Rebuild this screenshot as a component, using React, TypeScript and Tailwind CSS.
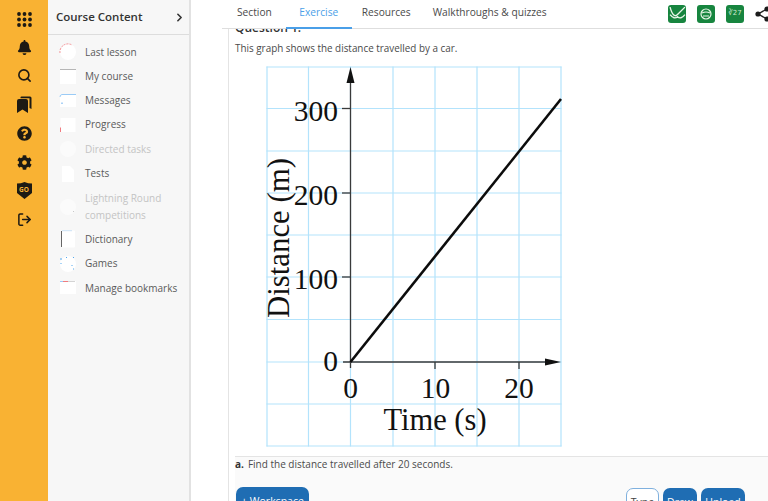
import React from 'react';
import { FaBell, FaCog, FaQuestionCircle } from 'react-icons/fa';
import { ChevronRight, LogOut, Search } from 'lucide-react';

const menu = [
	{ label: 'Last lesson', kind: 'lesson' },
	{ label: 'My course', kind: 'course' },
	{ label: 'Messages', kind: 'messages' },
	{ label: 'Progress', kind: 'progress' },
	{ label: 'Directed tasks', kind: 'directed', muted: true },
	{ label: 'Tests', kind: 'tests' },
	{ label: 'Lightning Round competitions', kind: 'lightning', muted: true },
	{ label: 'Dictionary', kind: 'dictionary' },
	{ label: 'Games', kind: 'games' },
	{ label: 'Manage bookmarks', kind: 'bookmarks' },
];

// the menu pictures did not load fully in the original, only slivers show
const MenuIcon = ({ kind }: { kind: string }) => (
	<svg width="18" height="18" viewBox="0 0 18 18" className="shrink-0">
		{kind === 'lesson' && (
			<>
				<circle cx="9" cy="9" r="8" fill="#fff" />
				<path d="M1 10A8 8 0 0 1 13 2" fill="none" stroke="#f27a7f" strokeWidth="0.8" strokeDasharray="2 1" />
			</>
		)}
		{kind === 'course' && (
			<>
				<rect x="1" y="2" width="16" height="15" fill="#fff" />
				<path d="M1 2.500H17" stroke="#a3a3a3" strokeWidth="0.8" />
			</>
		)}
		{kind === 'messages' && (
			<>
				<rect x="1" y="2" width="16" height="13" fill="#fff" />
				<path d="M17 2.500H3Q1 2.500 1 5" fill="none" stroke="#8ec5f5" strokeWidth="0.9" />
				<path d="M3 10.500V12" stroke="#5aa7ee" strokeWidth="1" />
			</>
		)}
		{kind === 'progress' && (
			<>
				<rect x="1.500" y="2" width="15" height="14" fill="#fff" />
				<path d="M1.500 11.500V16" stroke="#ee6c72" strokeWidth="0.9" />
			</>
		)}
		{kind === 'directed' && <circle cx="9" cy="9" r="8" fill="#fbfbfb" />}
		{kind === 'tests' && <path d="M3 1H11L15 5V17H3Z" fill="#fff" />}
		{kind === 'lightning' && (
			<>
				<circle cx="9" cy="9" r="8" fill="#fbfbfb" />
				<path d="M14.500 13V14" stroke="#bbb" strokeWidth="0.8" />
			</>
		)}
		{kind === 'dictionary' && (
			<>
				<rect x="2" y="0.500" width="14" height="17" rx="1" fill="#fff" />
				<path d="M2.500 1V17" stroke="#555" strokeWidth="0.9" />
				<path d="M3 0.700H13" stroke="#b8d8f3" strokeWidth="0.7" />
			</>
		)}
		{kind === 'games' && (
			<>
				<circle cx="9" cy="9" r="8" fill="#fff" />
				<path d="M1 4H3M7 2.500H8M14 2.500H15M2 8V9M13 10V11M14.500 13.500V14.500" stroke="#52a9ef" strokeWidth="1" />
			</>
		)}
		{kind === 'bookmarks' && (
			<>
				<rect x="1" y="2" width="16" height="13" fill="#fff" />
				<path d="M1 2.500H4" stroke="#8ec5f5" strokeWidth="0.9" />
				<path d="M4 2.500H9" stroke="#ee6c72" strokeWidth="0.9" />
				<path d="M9 2.500H16" stroke="#c9c9c9" strokeWidth="0.8" />
			</>
		)}
	</svg>
);

const AppsIcon = () => (
	<svg width="15" height="15" viewBox="0 0 15 15" fill="#1d1a14">
		{[2, 7.500, 13].map((y) => [2, 7.500, 13].map((x) => <circle key={`${x}-${y}`} cx={x} cy={y} r="1.900" />))}
	</svg>
);

const BookmarksIcon = () => (
	<svg width="15" height="17" viewBox="0 0 15 17" fill="#1d1a14">
		<path d="M0 5Q0 3 2 3H9Q11 3 11 5V17L5.500 13.500 0 17Z" />
		<path d="M3.500 1.800V1.500Q3.500 0.500 4.500 0.500H13Q14.500 0.500 14.500 2V13L12.500 12V2.200H3.500Z" />
	</svg>
);

const GoIcon = () => (
	<div className="relative flex h-[17px] w-[15px] items-start justify-center">
		<svg width="15" height="17" viewBox="0 0 15 17" className="absolute inset-0">
			<path d="M0 1.500Q4 1.500 7.500 0 11 1.500 15 1.500V11L7.500 17 0 11Z" fill="#1d1a14" />
		</svg>
		<span className="relative mt-[4px] text-[6.500px] leading-[8px] font-bold text-[#f9b233]">GO</span>
	</div>
);

const GreenIcon = ({ children }: { children: React.ReactNode }) => (
	<div className="flex h-[18px] w-[18px] items-center justify-center overflow-hidden rounded-[3px] bg-[#17853f]">{children}</div>
);

const Graph = () => {
	const xs = [267, 308.500, 350.500, 393, 435, 477, 519, 561];
	const ys = [67, 108.500, 151, 193, 235, 277, 319.500, 362, 404, 446];
	return (
		<svg width="300" height="384" viewBox="264 65 300 384" className="block" fontFamily='"Liberation Serif", serif' fill="#111">
			<rect x="267" y="67" width="294" height="379" fill="#fff" />
			{xs.map((x) => (
				<line key={x} x1={x} x2={x} y1="66.500" y2="446.500" stroke="#b3e3fc" strokeWidth="1.200" />
			))}
			{ys.map((y) => (
				<line key={y} x1="266.500" x2="561.500" y1={y} y2={y} stroke="#b3e3fc" strokeWidth="1.200" />
			))}
			<line x1="350.500" x2="350.500" y1="80" y2="368" stroke="#3a3a3a" strokeWidth="1.300" />
			<line x1="343" x2="546" y1="362" y2="362" stroke="#3a3a3a" strokeWidth="1.300" />
			<path d="M350.500 67L354.500 83H346.500Z" fill="#111" />
			<path d="M561 362L545 358.500V365.500Z" fill="#111" />
			{[108.500, 193, 277].map((y) => (
				<line key={y} x1="342" x2="350" y1={y} y2={y} stroke="#3a3a3a" strokeWidth="1.300" />
			))}
			{[435, 519].map((x) => (
				<line key={x} x1={x} x2={x} y1="362" y2="369" stroke="#3a3a3a" strokeWidth="1.300" />
			))}
			<line x1="350.500" y1="362" x2="561" y2="99" stroke="#0c0c0c" strokeWidth="2.600" />
			<g fontSize="29.500">
				<text x="338" y="121" textAnchor="end">300</text>
				<text x="338" y="205" textAnchor="end">200</text>
				<text x="338" y="289" textAnchor="end">100</text>
				<text x="338" y="371" textAnchor="end">0</text>
				<text x="350.500" y="398" textAnchor="middle">0</text>
				<text x="435.500" y="398" textAnchor="middle">10</text>
				<text x="519" y="398" textAnchor="middle">20</text>
			</g>
			<text x="435" y="430" textAnchor="middle" fontSize="30.500">Time (s)</text>
			<text transform="translate(289 318) rotate(-90)" fontSize="30.800">Distance (m)</text>
		</svg>
	);
};

const App = () => {
	return (
		<div className="flex h-[501px] w-[768px] overflow-hidden bg-white font-['Open_Sans',sans-serif] text-[#4a4a4a]">
			<nav className="flex w-[48px] shrink-0 flex-col items-center bg-[#f9b233] pt-[12px] text-[#1d1a14]">
				<AppsIcon />
				<div className="mt-[13px]"><FaBell size={15} /></div>
				<div className="mt-[13px]"><Search size={15} strokeWidth={2.600} /></div>
				<div className="mt-[13px]"><BookmarksIcon /></div>
				<div className="mt-[13px]"><FaQuestionCircle size={15} /></div>
				<div className="mt-[14px]"><FaCog size={15} /></div>
				<div className="mt-[12px]"><GoIcon /></div>
				<div className="mt-[13px]"><LogOut size={15} strokeWidth={2.400} /></div>
			</nav>

			<aside className="w-[143px] shrink-0 border-r-2 border-[#e2e2e2] bg-[#f7f7f7]">
				<div className="flex h-[35px] items-center justify-between border-b border-[#dddddd] pr-[3px] pl-[8px]">
					<span className="text-[11.500px] font-semibold text-[#333]">Course Content</span>
					<ChevronRight size={13} strokeWidth={3} className="text-[#333]" />
				</div>
				<ul className="pt-[5px]">
					{menu.map((item) => (
						<li
							key={item.label}
							className={`flex items-center pb-[3.150px] pl-[11px] ${item.kind === 'lightning' ? 'pt-[4.500px]' : 'pt-[3.150px]'} ${item.muted ? 'text-[#c4c4c4]' : 'text-[#5a5a5a]'}`}
						>
							<MenuIcon kind={item.kind} />
							<span className="ml-[8px] w-[98px] text-[10px] leading-[17px]">{item.label}</span>
						</li>
					))}
				</ul>
			</aside>

			<main className="flex min-w-0 flex-1 flex-col">
				<header className="relative z-10 ml-[31px] flex h-[29px] shrink-0 items-stretch border-b border-[#dedede] bg-white text-[10.200px]">
					<div className="ml-[15px] pt-[5px]">Section</div>
					<div className="ml-[14px] h-[29px] w-[66px] border-b-2 border-[#4a9fe8] pt-[5px] text-center text-[#4a9fe8]">Exercise</div>
					<div className="ml-[10px] pt-[5px]">Resources</div>
					<div className="ml-[22px] pt-[5px]">Walkthroughs &amp; quizzes</div>
					<div className="ml-auto flex h-[27px] items-center gap-[11px]">
						<GreenIcon>
							<svg width="17" height="17" viewBox="0 0 16 16" fill="none" stroke="#e8f5e8" strokeWidth="1.300">
								<path d="M1 2Q4 13 8 9T15 2M1 9Q5 14 8 11 11 14 15 9" />
							</svg>
						</GreenIcon>
						<GreenIcon>
							<svg width="12" height="12" viewBox="0 0 12 12" fill="none" stroke="#e8f5e8" strokeWidth="1.200">
								<circle cx="6" cy="6" r="5" />
								<path d="M2 5Q6 3 10 5M3 8H9" />
							</svg>
						</GreenIcon>
						<GreenIcon>
							<span className="font-['DejaVu_Sans',sans-serif] text-[7px] leading-none text-[#cfe9cf]">∛27</span>
						</GreenIcon>
						<svg width="13" height="16" viewBox="0 0 13 16" fill="#1d1d1d" className="shrink-0 overflow-visible">
							<circle cx="3" cy="8" r="2.600" />
							<circle cx="12" cy="3" r="2.600" />
							<circle cx="12" cy="13" r="2.600" />
							<path d="M3 8L12 3M3 8L12 13" stroke="#1d1d1d" strokeWidth="1.400" />
						</svg>
					</div>
				</header>

				<section className="ml-[37px] min-h-0 flex-1 overflow-hidden border-l border-[#e4e4e4]">
					<div className="-mt-[10px] pl-[6px]">
						<h2 className="text-[12px] leading-[17px] font-semibold text-[#333]">Question 1:</h2>
						<p className="mt-[4px] text-[9.900px] leading-[16px]">This graph shows the distance travelled by a car.</p>
						<div className="mt-[9px] ml-[29px]">
							<Graph />
						</div>
						<div className="mt-[7px] border-t border-[#e4e4e4] bg-[#fafafa]">
							<p className="text-[10px] leading-[15px]">
								<b className="mr-[4px] font-bold text-[#333]">a.</b>Find the distance travelled after 20 seconds.
							</p>
							<div className="mt-[15px] flex items-start pr-[23px] pl-[1px]">
								<button className="h-[30px] w-[73px] rounded-t-[7px] bg-[#1f6db3] text-[10.500px] text-white">+ Workspace</button>
								<div className="ml-auto flex gap-[4px] pt-[1px]">
									<button className="h-[30px] w-[33px] rounded-t-[7px] border border-[#7fb0de] bg-white text-[10.500px] text-[#444]">Type</button>
									<button className="h-[30px] w-[34px] rounded-t-[7px] bg-[#1f6db3] text-[10.500px] text-white">Draw</button>
									<button className="h-[30px] w-[44px] rounded-t-[7px] bg-[#1f6db3] text-[10.500px] text-white">Upload</button>
								</div>
							</div>
						</div>
					</div>
				</section>
			</main>
		</div>
	);
};

export default App;
